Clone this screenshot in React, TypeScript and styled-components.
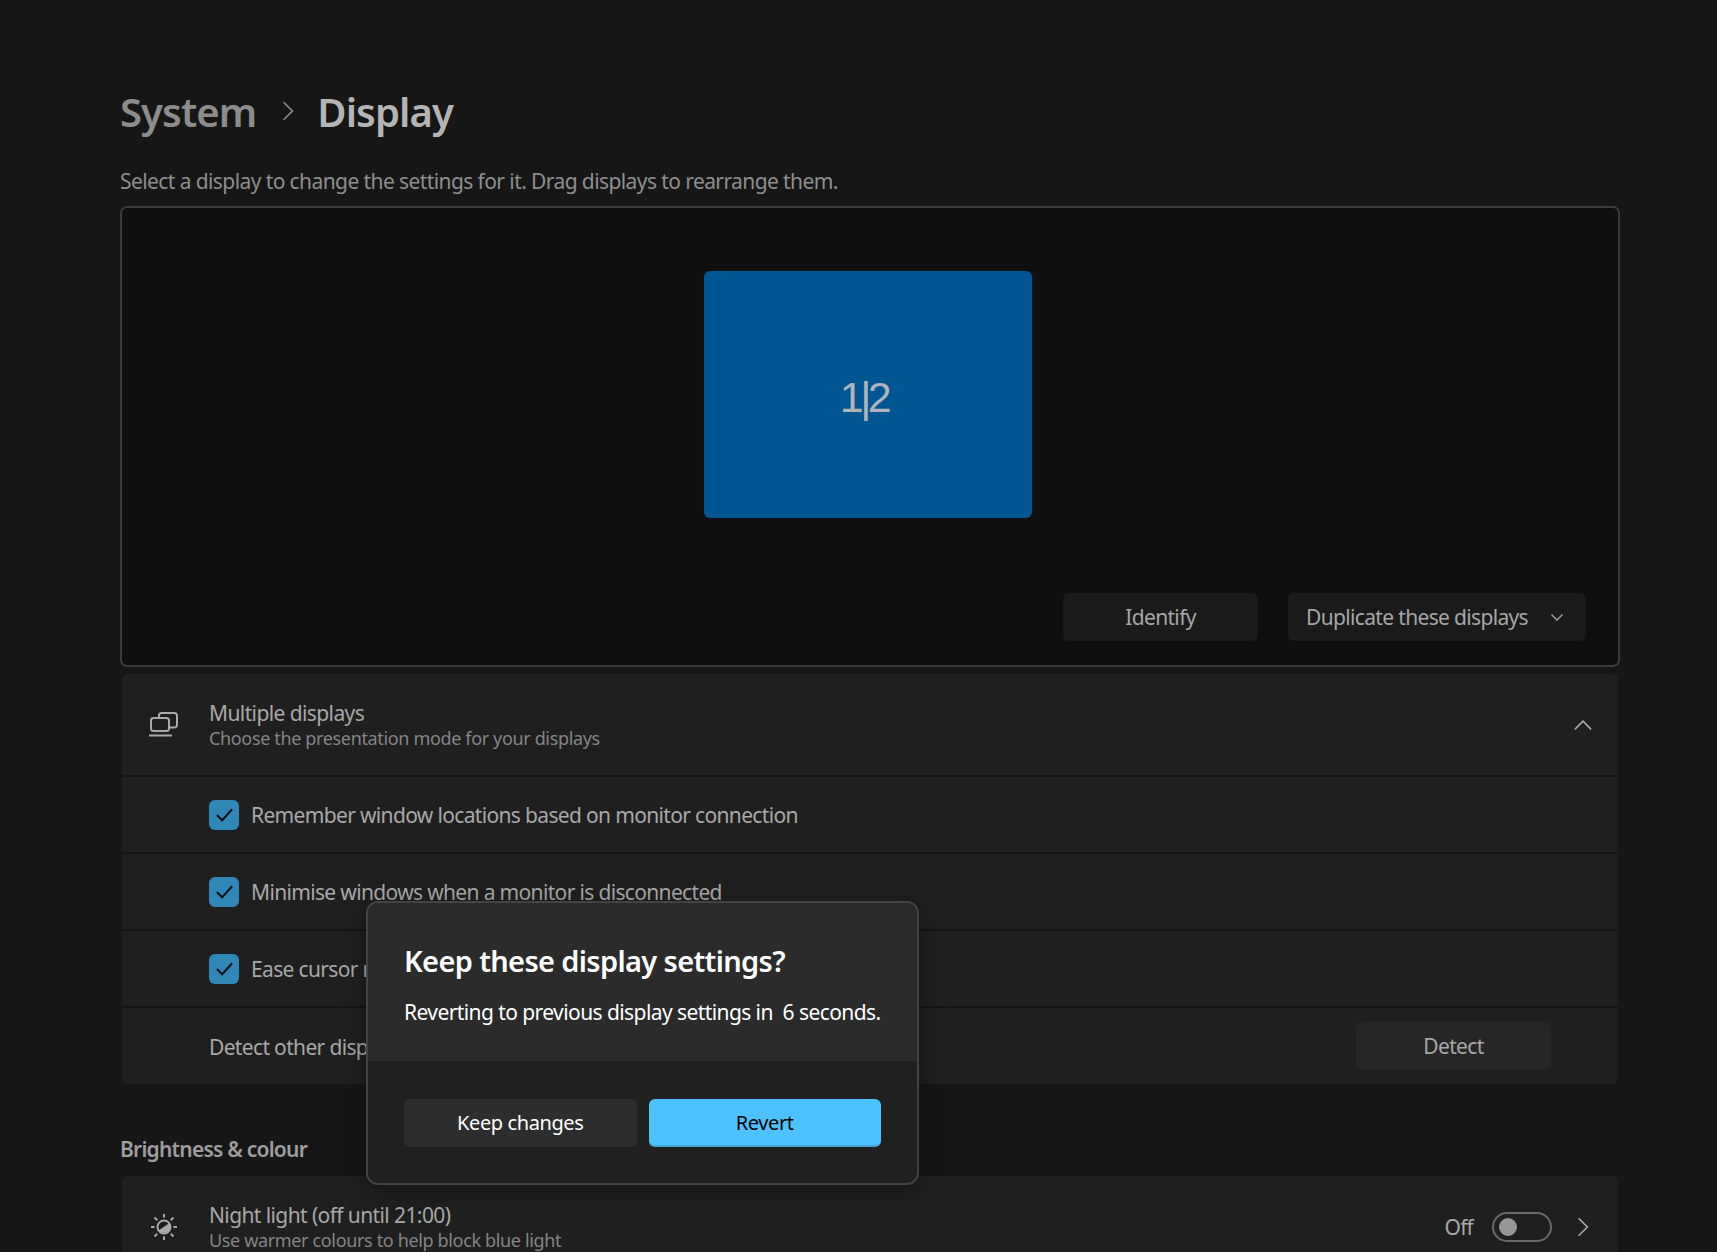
import React from 'react';
import styled, { createGlobalStyle } from 'styled-components';

const GlobalStyle = createGlobalStyle`
  html, body {
    margin: 0;
    padding: 0;
    height: 1252px;
    overflow: hidden;
    background: #161616;
  }
  * { box-sizing: border-box; }
`;

const Page = styled.div`
  position: relative;
  width: 1717px;
  height: 1252px;
  overflow: hidden;
  padding: 82px 97px 0 120px;
  background: #161616;
  font-family: 'Noto Sans', 'Open Sans', sans-serif;
  font-size: 21px;
  letter-spacing: -0.66px;
  color: #aaaaaa;
`;

const Breadcrumb = styled.div`
  display: flex;
  align-items: center;
  height: 58px;
  font-size: 40px;
  font-weight: 600;
  letter-spacing: -0.9px;
`;

const Crumb = styled.span<{ $current?: boolean }>`
  color: ${({ $current }) => ($current ? '#b4b4b4' : '#8c8c8c')};
`;

const CrumbSep = styled.span`
  display: flex;
  width: 39px;
  margin-left: 22px;
  color: #8c8c8c;
`;

const Intro = styled.p`
  margin: 13px 0 0;
  height: 53px;
  line-height: 56px;
  letter-spacing: -0.59px;
  color: #8e8e8e;
`;

const Arrange = styled.section`
  display: flex;
  flex-direction: column;
  height: 461px;
  padding: 63px 31px 0 0;
  background: #0f0f0f;
  border: 2px solid #3a3a3a;
  border-radius: 7px;
`;

const Monitor = styled.div`
  display: flex;
  align-items: center;
  justify-content: center;
  align-self: center;
  width: 328px;
  height: 247px;
  margin-left: 27px;
  padding: 5px 8px 0 0;
  background: #005693;
  border-radius: 6px;
  font-family: 'Liberation Sans', sans-serif;
  font-size: 43px;
  letter-spacing: -3.5px;
  color: #aeb4ba;
`;

const ArrangeActions = styled.div`
  display: flex;
  justify-content: flex-end;
  gap: 30px;
  margin-top: 75px;
  padding-right: 1px;
`;

const Button = styled.button<{ $wide?: boolean; $raised?: boolean }>`
  display: flex;
  align-items: center;
  justify-content: ${({ $wide }) => ($wide ? 'space-between' : 'center')};
  width: ${({ $wide }) => ($wide ? '298px' : '195px')};
  height: 48px;
  padding: ${({ $wide }) => ($wide ? '0 21px 0 18px' : '0')};
  border: 0;
  border-radius: 6px;
  background: ${({ $raised }) => ($raised ? '#262626' : '#1a1a1a')};
  color: #a6a6a6;
  font: inherit;
  letter-spacing: -0.66px;
`;

const Card = styled.section<{ $clip?: boolean }>`
  margin: ${({ $clip }) => ($clip ? '0' : '7px 0 0')};
  width: 1496px;
  margin-left: 2px;
  background: #1f1f1f;
  border-radius: 6px;
`;

const Row = styled.div<{ $tall?: boolean }>`
  display: flex;
  align-items: center;
  height: ${({ $tall }) => ($tall ? '101px' : '77px')};
  padding: 0 67px 0 87px;
  & + & {
    border-top: 2px solid #141414;
  }
  &:last-child:not(:first-child) {
    height: 78px;
  }
`;

const HeaderRow = styled(Row)`
  padding: 0 25px 0 27px;
`;

const RowIcon = styled.span`
  display: flex;
  justify-content: center;
  width: 30px;
  margin-right: 30px;
  color: #a8a8a8;
`;

const RowText = styled.div`
  display: flex;
  flex-direction: column;
  flex: 1;
  padding-top: 2px;
  line-height: 25px;
`;

const RowTitle = styled.span`
  letter-spacing: -0.6px;
  color: #a8a8a8;
`;

const RowSub = styled.span`
  font-size: 18px;
  letter-spacing: -0.35px;
  color: #858585;
`;

const RowLabel = styled.span<{ $nudge?: boolean }>`
  flex: 1;
  padding-top: ${({ $nudge }) => ($nudge ? '2px' : '0')};
  color: #a8a8a8;
`;

const Check = styled.span`
  display: flex;
  align-items: center;
  justify-content: center;
  width: 30px;
  height: 30px;
  margin-right: 12px;
  border-radius: 6px;
  background: #2f88b8;
  color: #101010;
`;

const SectionTitle = styled.h2`
  margin: 50px 0 0;
  height: 42px;
  line-height: 30px;
  font-size: 21px;
  font-weight: 600;
  color: #9e9e9e;
  letter-spacing: -0.78px;
`;

const StateLabel = styled.span`
  margin-right: 19px;
  letter-spacing: -0.8px;
  color: #a8a8a8;
`;

const Toggle = styled.span`
  display: flex;
  align-items: center;
  width: 60px;
  height: 30px;
  padding-left: 5px;
  border: 2px solid #6a6a6a;
  border-radius: 15px;
  margin-right: 21px;
`;

const Knob = styled.span`
  width: 18px;
  height: 18px;
  border-radius: 50%;
  background: #969696;
`;

const Dialog = styled.div`
  position: absolute;
  left: 366px;
  top: 901px;
  width: 553px;
  height: 284px;
  display: flex;
  flex-direction: column;
  overflow: hidden;
  border: 2px solid #434343;
  border-radius: 12px;
  background: #202020;
  box-shadow: 0 6px 24px rgba(0, 0, 0, 0.35);
  letter-spacing: -0.58px;
`;

const DialogBody = styled.div`
  height: 158px;
  padding: 33px 36px 0;
  background: #2b2b2b;
  color: #ffffff;
`;

const DialogTitle = styled.h3`
  margin: 0;
  height: 50px;
  line-height: 50px;
  font-size: 29px;
  font-weight: 600;
  letter-spacing: -0.65px;
`;

const DialogText = styled.p`
  margin: 4px 0 0;
  line-height: 44px;
  white-space: pre;
`;

const DialogFooter = styled.div`
  display: flex;
  gap: 12px;
  padding: 38px 36px 0;
`;

const DialogButton = styled.button<{ $accent?: boolean }>`
  flex: 1;
  height: 48px;
  padding: 0;
  border: 0;
  border-radius: 6px;
  background: ${({ $accent }) => ($accent ? '#4cc2ff' : '#2d2d2d')};
  border-bottom: 2px solid ${({ $accent }) => ($accent ? '#42a7dc' : '#2d2d2d')};
  color: ${({ $accent }) => ($accent ? '#000000' : '#ffffff')};
  font: inherit;
  font-size: 20px;
  letter-spacing: -0.4px;
`;

function Chevron({ dir, size = 16 }: { dir: 'up' | 'down' | 'right'; size?: number }) {
  const d = {
    up: 'M1.5 11.5 8 5l6.5 6.5',
    down: 'M2.5 5.5 8 11l5.5-5.5',
    right: 'M4.5 1l7 7-7 7',
  }[dir];
  return (
    <svg width={size} height={size} viewBox="0 0 16 16" fill="none" stroke="currentColor" strokeWidth="1.3">
      <path d={d} />
    </svg>
  );
}

function DisplaysIcon() {
  return (
    <svg width="30" height="26" viewBox="0 0 30 26" fill="none" stroke="currentColor" strokeWidth="2">
      <path d="M10 5V3.5A2.5 2.5 0 0 1 12.5 1h13A2.5 2.5 0 0 1 28 3.5V13a2.5 2.5 0 0 1-2.5 2.5H20" />
      <rect x="2" y="6" width="18" height="13" rx="2.5" />
      <path d="M0 23.5h23" />
    </svg>
  );
}

function SunIcon() {
  return (
    <svg width="34" height="34" viewBox="0 0 30 30" fill="none" stroke="currentColor" strokeWidth="2">
      <circle cx="15" cy="15" r="6.5" />
      <path d="M9.5 18.5a6.5 6.5 0 0 0 10 .5 6.5 6.5 0 0 0 1-8z" fill="currentColor" stroke="none" />
      <path d="M15 2v3.5M15 24.5V28M2 15h3.5M24.5 15H28M5.5 5.5l2.7 2.7M21.8 21.8l2.7 2.7M5.5 24.5l2.7-2.7M21.8 8.2l2.7-2.7" />
    </svg>
  );
}

function CheckMark() {
  return (
    <svg width="21" height="21" viewBox="0 0 18 18" fill="none" stroke="currentColor" strokeWidth="1.8">
      <path d="M2.5 9.5 7 14l8.5-9.5" />
    </svg>
  );
}

const checks = [
  'Remember window locations based on monitor connection',
  'Minimise windows when a monitor is disconnected',
  'Ease cursor movement between displays',
];

export default function App() {
  return (
    <Page>
      <GlobalStyle />
      <Breadcrumb>
        <Crumb>System</Crumb>
        <CrumbSep>
          <Chevron dir="right" size={20} />
        </CrumbSep>
        <Crumb $current>Display</Crumb>
      </Breadcrumb>
      <Intro>Select a display to change the settings for it. Drag displays to rearrange them.</Intro>
      <Arrange>
        <Monitor>1|2</Monitor>
        <ArrangeActions>
          <Button>Identify</Button>
          <Button $wide>
            Duplicate these displays
            <Chevron dir="down" size={16} />
          </Button>
        </ArrangeActions>
      </Arrange>
      <Card>
        <HeaderRow $tall>
          <RowIcon>
            <DisplaysIcon />
          </RowIcon>
          <RowText>
            <RowTitle>Multiple displays</RowTitle>
            <RowSub>Choose the presentation mode for your displays</RowSub>
          </RowText>
          <Chevron dir="up" size={20} />
        </HeaderRow>
        {checks.map((label) => (
          <Row key={label}>
            <Check>
              <CheckMark />
            </Check>
            <RowLabel>{label}</RowLabel>
          </Row>
        ))}
        <Row>
          <RowLabel $nudge>Detect other display</RowLabel>
          <Button $raised>Detect</Button>
        </Row>
      </Card>
      <SectionTitle>Brightness &amp; colour</SectionTitle>
      <Card $clip>
        <HeaderRow $tall>
          <RowIcon>
            <SunIcon />
          </RowIcon>
          <RowText>
            <RowTitle>Night light (off until 21:00)</RowTitle>
            <RowSub>Use warmer colours to help block blue light</RowSub>
          </RowText>
          <StateLabel>Off</StateLabel>
          <Toggle>
            <Knob />
          </Toggle>
          <Chevron dir="right" size={20} />
        </HeaderRow>
      </Card>
      <Dialog>
        <DialogBody>
          <DialogTitle>Keep these display settings?</DialogTitle>
          <DialogText>{'Reverting to previous display settings in  6 seconds.'}</DialogText>
        </DialogBody>
        <DialogFooter>
          <DialogButton>Keep changes</DialogButton>
          <DialogButton $accent>Revert</DialogButton>
        </DialogFooter>
      </Dialog>
    </Page>
  );
}
